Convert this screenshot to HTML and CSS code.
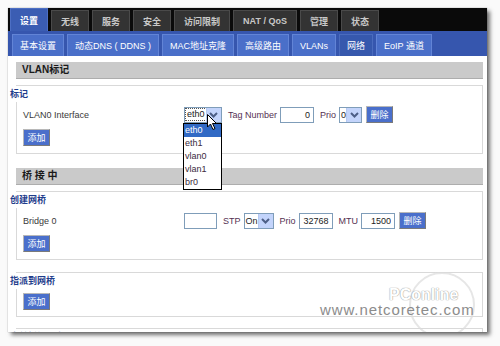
FILE: index.html
```html
<!DOCTYPE html>
<html lang="zh-CN">
  <head>
    <meta charset="UTF-8" />
    <title>网络 - 设置</title>
    <link rel="stylesheet" href="styles.css">
  </head>
  <body>
    <div class="window">
      <div class="tabs">
        <span class="tab active">设置</span>
        <span class="tab">无线</span>
        <span class="tab">服务</span>
        <span class="tab">安全</span>
        <span class="tab">访问限制</span>
        <span class="tab">NAT / QoS</span>
        <span class="tab">管理</span>
        <span class="tab">状态</span>
      </div>
      <div class="subtabs">
        <span class="subtab">基本设置</span>
        <span class="subtab">动态DNS ( DDNS )</span>
        <span class="subtab">MAC地址克隆</span>
        <span class="subtab">高级路由</span>
        <span class="subtab">VLANs</span>
        <span class="subtab active">网络</span>
        <span class="subtab">EoIP 通道</span>
      </div>

      <div class="content">
        <div class="section-head">VLAN标记</div>
        <div class="group">
          <div class="legend">标记</div>
          <div class="row">
            <span class="field-label">VLAN0 Interface</span>
            <span class="select sel-iface">
              <span class="sel-text"><span class="focus-ring">eth0</span></span>
              <span class="sel-btn"><svg width="9" height="6" viewBox="0 0 9 6"><path d="M1 1 L4.5 4.5 L8 1" fill="none" stroke="#4d5f86" stroke-width="2"/></svg></span>
              <ul class="dropdown">
                <li class="picked">eth0</li>
                <li>eth1</li>
                <li>vlan0</li>
                <li>vlan1</li>
                <li>br0</li>
              </ul>
              <svg class="cursor" width="11" height="17" viewBox="0 0 11 17"><path d="M0.5 0.5 L0.5 13 L3.5 10 L6 15.5 L8 14.5 L5.5 9.5 L9.5 9.5 Z" fill="#fff" stroke="#000" stroke-width="1"/></svg>
            </span>
            <span class="ctl-label">Tag Number</span>
            <input class="num w34" type="text" value="0">
            <span class="ctl-label">Prio</span>
            <span class="select sel-prio">
              <span class="sel-text">0</span>
              <span class="sel-btn"><svg width="9" height="6" viewBox="0 0 9 6"><path d="M1 1 L4.5 4.5 L8 1" fill="none" stroke="#4d5f86" stroke-width="2"/></svg></span>
            </span>
            <button class="btn del">删除</button>
          </div>
          <button class="btn">添加</button>
        </div>

        <div class="section-head spaced">桥 接 中</div>
        <div class="group">
          <div class="legend">创建网桥</div>
          <div class="row">
            <span class="field-label">Bridge 0</span>
            <input class="num w33" type="text" value="">
            <span class="ctl-label">STP</span>
            <span class="select sel-stp">
              <span class="sel-text">On</span>
              <span class="sel-btn"><svg width="9" height="6" viewBox="0 0 9 6"><path d="M1 1 L4.5 4.5 L8 1" fill="none" stroke="#4d5f86" stroke-width="2"/></svg></span>
            </span>
            <span class="ctl-label">Prio</span>
            <input class="num w34" type="text" value="32768">
            <span class="ctl-label">MTU</span>
            <input class="num w34" type="text" value="1500">
            <button class="btn del">删除</button>
          </div>
          <button class="btn">添加</button>
        </div>

        <div class="group short">
          <div class="legend">指派到网桥</div>
          <button class="btn">添加</button>
        </div>

        <div class="group last">
          <div class="legend">当前桥接列表</div>
        </div>
      </div>

      <div class="watermark">
        <span class="pc-ring"></span>
        <span class="pc-logo">PConline</span>
        <span class="site">www.netcoretec.com</span>
      </div>
    </div>
  </body>
</html>
```

FILE: styles.css
```css
body {
  margin: 0;
  padding: 8px;
  background: #fafafa;
  font-family: "Liberation Sans", "Noto Sans CJK SC", sans-serif;
  font-size: 9px;
  color: #333;
}
.window {
  position: relative;
  width: 479px;
  height: 324px;
  overflow: hidden;
  background: #fff;
  box-shadow: 3px 3px 4px rgba(0, 0, 0, 0.55), 0 0 1px rgba(0, 0, 0, 0.4);
}

/* top tabs */
.tabs {
  display: flex;
  align-items: flex-end;
  gap: 3px;
  height: 23px;
  padding-left: 2px;
  background: #0a0a0a;
}
.tab {
  display: flex;
  align-items: center;
  justify-content: center;
  height: 20px;
  padding: 0 9px;
  background: #333;
  border: 1px solid #4a4a4a;
  border-bottom: none;
  color: #c8c8c8;
  font-weight: bold;
}
.tab.active {
  height: 22px;
  background: #3b5db3;
  border-color: #4d6fc4;
  color: #fff;
}

/* sub tabs */
.subtabs {
  display: flex;
  align-items: flex-end;
  gap: 3px;
  height: 25px;
  padding-left: 4px;
  background: #3656ae;
}
.subtab {
  display: flex;
  align-items: center;
  justify-content: center;
  height: 21px;
  padding: 0 7px;
  background: #4a6fc9;
  border: 1px solid #6284d6;
  border-bottom: none;
  color: #fff;
}
.subtab.active {
  background: #3658ad;
  border-color: #4a6bbd;
}

/* content */
.content {
  padding: 6px 4px 0 8px;
}
.section-head {
  height: 16px;
  line-height: 16px;
  padding-left: 6px;
  background: #cacaca;
  border-bottom: 1px solid #adadad;
  color: #1a1a1a;
  font-size: 10px;
  font-weight: bold;
}
.section-head.spaced {
  margin-top: 14px;
}
.group {
  margin-top: 6px;
  padding: 0 0 7px 6px;
  border: 1px solid #d9d9d9;
}
.group.short {
  margin-top: 12px;
  padding-bottom: 6px;
}
.group.last {
  margin-top: 11px;
}
.legend {
  height: 16px;
  line-height: 16px;
  margin-left: -14px;
  padding-left: 1px;
  width: max-content;
  background: #fff;
  color: #1f3d8c;
  font-size: 9px;
  font-weight: bold;
}
.row {
  display: flex;
  align-items: center;
  height: 17px;
  margin-top: 4px;
  margin-bottom: 6px;
}
.group.short .btn {
  margin-top: 4px;
}
.field-label {
  width: 161px;
  color: #3a3a3a;
}
.ctl-label {
  margin: 0 3px 0 6px;
  color: #553052;
}

/* form controls */
.select {
  position: relative;
  display: flex;
  height: 16px;
  box-sizing: border-box;
  border: 1px solid #7f9db9;
  background: #fff;
}
.sel-text {
  flex: 1;
  display: flex;
  align-items: center;
  padding-left: 1px;
  color: #222;
}
.focus-ring {
  padding: 0 1px;
  outline: 1px dotted #555;
  line-height: 11px;
}
.sel-btn {
  display: flex;
  align-items: center;
  justify-content: center;
  width: 15px;
  background: #c3d4fb;
  border-left: 1px solid #b5c8f2;
}
.sel-iface { width: 38px; }
.sel-prio { width: 23px; }
.sel-stp { width: 30px; }
.dropdown {
  position: absolute;
  top: 15px;
  left: -2px;
  width: 37px;
  margin: 0;
  padding: 0;
  list-style: none;
  background: #fff;
  border: 1px solid #000;
  z-index: 2;
}
.dropdown li {
  height: 13px;
  line-height: 13px;
  padding-left: 1px;
  color: #3b2a40;
}
.dropdown li.picked {
  background: #316ac5;
  color: #fff;
}
.cursor {
  position: absolute;
  left: 22px;
  top: 6px;
  z-index: 3;
}
.num {
  height: 16px;
  box-sizing: border-box;
  margin: 0;
  padding: 0 3px;
  border: 1px solid #7f9db9;
  font: 9px "Liberation Sans", sans-serif;
  color: #222;
  text-align: right;
}
.w33 { width: 33px; }
.w34 { width: 34px; }
.btn {
  display: block;
  width: 27px;
  height: 17px;
  padding: 0;
  background: #4a6fcb;
  border: 1px solid;
  border-color: #b8b8b8 #7a7a7a #7a7a7a #b8b8b8;
  color: #fff;
  font: 9px "Noto Sans CJK SC", sans-serif;
}
.btn.del {
  margin-left: 4px;
}

/* watermark over the page */
.watermark {
  position: absolute;
  right: 0;
  bottom: 0;
  width: 170px;
  height: 60px;
  pointer-events: none;
}
.pc-ring {
  position: absolute;
  left: 92px;
  top: 0;
  width: 62px;
  height: 62px;
  border-radius: 50%;
  border: 2px solid rgba(220, 220, 220, 0.7);
}
.pc-logo {
  position: absolute;
  left: 72px;
  top: 14px;
  color: #fff;
  font: bold 16px "Liberation Sans", sans-serif;
  text-shadow: 0 0 1px #999, 0 0 1px #999;
}
.site {
  position: absolute;
  left: 3px;
  top: 29px;
  color: #8c8c8c;
  font: 15px "Liberation Sans", sans-serif;
  letter-spacing: 0.9px;
}
```
